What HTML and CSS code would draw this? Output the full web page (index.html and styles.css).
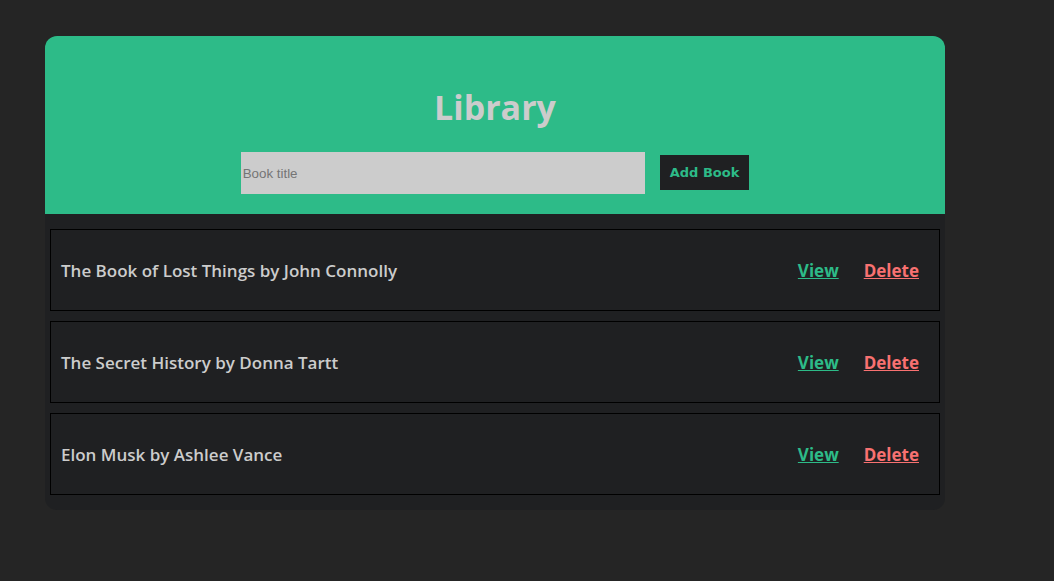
FILE: index.html
```html
<!DOCTYPE html>
<html lang="en">
<head>
    <meta charset="UTF-8">
    <meta name="viewport" content="width=device-width, initial-scale=1.0">
    <title>Library</title>
    <link rel="stylesheet" href="styles.css">
</head>
<body>
    <div class="container">
        <header class="header">
            <h1>Library</h1>
            <form class="add-form" onsubmit="return false">
                <input type="text" id="bookInput" placeholder="Book title">
                <button class="add-book" type="submit">Add Book</button>
            </form>
        </header>
        <ul class="book-list">
            <li class="book">
                <span class="book-title">The Book of Lost Things by John Connolly</span>
                <div class="book-actions">
                    <a href="#" class="view">View</a>
                    <a href="#" class="delete">Delete</a>
                </div>
            </li>
            <li class="book">
                <span class="book-title">The Secret History by Donna Tartt</span>
                <div class="book-actions">
                    <a href="#" class="view">View</a>
                    <a href="#" class="delete">Delete</a>
                </div>
            </li>
            <li class="book">
                <span class="book-title">Elon Musk by Ashlee Vance</span>
                <div class="book-actions">
                    <a href="#" class="view">View</a>
                    <a href="#" class="delete">Delete</a>
                </div>
            </li>
        </ul>
    </div>
</body>
</html>
```

FILE: styles.css
```css
* {
    box-sizing: border-box;
}

body {
    margin: 0;
    padding: 36px 45px;
    background: #252525;
    font-family: 'Open Sans', 'Noto Sans', sans-serif;
}

.container {
    width: 900px;
    background: #1f2022;
    border-radius: 12px;
    overflow: hidden;
}

.header {
    background: #2dbb88;
    padding: 20px;
    text-align: center;
}

.header h1 {
    margin: 27px 0 21px;
    font-size: 34px;
    line-height: 48px;
    font-weight: 700;
    color: #cccccc;
}

.add-form {
    display: flex;
    justify-content: center;
    align-items: center;
}

.add-form input {
    width: 404px;
    height: 42px;
    border: none;
    padding: 2px;
    background: #cccccc;
    font-family: 'Liberation Sans', Arial, sans-serif;
    font-size: 13.33px;
    color: #333;
    outline: none;
}

.add-form input::placeholder {
    color: #757575;
}

button.add-book {
    margin-left: 15px;
    margin-top: -2px;
    height: 35px;
    padding: 0 10px;
    border: none;
    background: #1f2022;
    color: #2dbb88;
    font-family: 'DejaVu Sans', Verdana, sans-serif;
    font-weight: 700;
    font-size: 13px;
    cursor: pointer;
}

.book-list {
    list-style: none;
    margin: 0;
    padding: 15px 5px;
    display: flex;
    flex-direction: column;
    gap: 10px;
}

.book {
    display: flex;
    justify-content: space-between;
    align-items: center;
    height: 82px;
    padding: 0 20px 0 10px;
    border: 1px solid #000;
    color: #cccccc;
    font-size: 17px;
    font-weight: 600;
}

.book-actions {
    display: flex;
    gap: 25px;
}

.book-actions a {
    font-weight: 700;
    text-decoration: underline;
}

a.view {
    color: #2dbb88;
}

a.delete {
    color: #f87171;
}
```
